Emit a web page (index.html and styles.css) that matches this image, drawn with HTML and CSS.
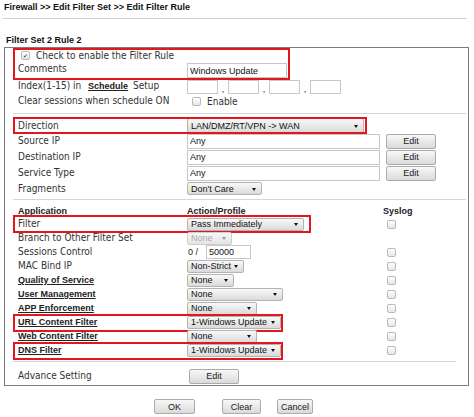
FILE: index.html
```html
<!DOCTYPE html>
<html>
<head>
<meta charset="utf-8">
<link rel="stylesheet" href="styles.css">
</head>
<body>
<div class="page">
  <div class="crumb">Firewall &gt;&gt; Edit Filter Set &gt;&gt; Edit Filter Rule</div>
  <div class="title"><span>Filter Set 2 Rule 2</span></div>
  <div class="box">
    <div class="hl hl-1">
      <div class="row r15">
        <div class="lbl span-all"><span class="cb checked">&#10004;</span><span class="cb-text">Check to enable the Filter Rule</span></div>
      </div>
      <div class="row r15 top">
        <div class="lbl">Comments</div>
        <div class="val"><span class="inp w100">Windows Update</span></div>
      </div>
    </div>
    <div class="row r16">
      <div class="lbl">Index(1-15) in <b class="link">Schedule</b> Setup</div>
      <div class="val"><span class="inp small"></span><span class="comma">,</span><span class="inp small"></span><span class="comma">,</span><span class="inp small"></span><span class="comma">,</span><span class="inp small"></span></div>
    </div>
    <div class="row r14">
      <div class="lbl">Clear sessions when schedule ON</div>
      <div class="val"><span class="cb cb-en"></span><span class="enable">Enable</span></div>
    </div>
    <div class="sep sep-1"></div>
    <div class="hl hl-dir">
      <div class="row r15">
        <div class="lbl">Direction</div>
        <div class="val"><span class="sel h14 w176">LAN/DMZ/RT/VPN -&gt; WAN<i class="arr"></i></span></div>
      </div>
    </div>
    <div class="row r16">
      <div class="lbl">Source IP</div>
      <div class="val wide"><span class="inp w192">Any</span><span class="btn w50">Edit</span></div>
    </div>
    <div class="row r16">
      <div class="lbl">Destination IP</div>
      <div class="val wide"><span class="inp w192">Any</span><span class="btn w50">Edit</span></div>
    </div>
    <div class="row r16">
      <div class="lbl">Service Type</div>
      <div class="val wide"><span class="inp w192">Any</span><span class="btn w50">Edit</span></div>
    </div>
    <div class="row r15">
      <div class="lbl">Fragments</div>
      <div class="val"><span class="sel w75">Don't Care<i class="arr"></i></span></div>
    </div>
    <div class="sep sep-2"></div>
    <div class="row r13 head">
      <div>Application</div>
      <div>Action/Profile</div>
      <div class="syslog-h">Syslog</div>
    </div>
    <div class="hl hl-filter">
      <div class="row r14">
        <div class="lbl">Filter</div>
        <div class="val"><span class="sel w116">Pass Immediately<i class="arr"></i></span></div>
        <div class="sys"><span class="cb"></span></div>
      </div>
    </div>
    <div class="row r14">
      <div class="lbl">Branch to Other Filter Set</div>
      <div class="val"><span class="sel w45 disabled">None<i class="arr"></i></span></div>
      <div class="sys"></div>
    </div>
    <div class="row r14">
      <div class="lbl">Sessions Control</div>
      <div class="val"><span class="zero">0 /</span><span class="inp w45 h14">50000</span></div>
      <div class="sys"><span class="cb"></span></div>
    </div>
    <div class="row r14">
      <div class="lbl">MAC Bind IP</div>
      <div class="val"><span class="sel w56">Non-Strict<i class="arr"></i></span></div>
      <div class="sys"><span class="cb"></span></div>
    </div>
    <div class="row r14">
      <div class="lbl link">Quality of Service</div>
      <div class="val"><span class="sel w46">None<i class="arr"></i></span></div>
      <div class="sys"><span class="cb"></span></div>
    </div>
    <div class="row r14">
      <div class="lbl link">User Management</div>
      <div class="val"><span class="sel w95">None<i class="arr"></i></span></div>
      <div class="sys"><span class="cb"></span></div>
    </div>
    <div class="row r14">
      <div class="lbl link">APP Enforcement</div>
      <div class="val"><span class="sel w69">None<i class="arr"></i></span></div>
      <div class="sys"><span class="cb"></span></div>
    </div>
    <div class="hl hl-url">
      <div class="row r14">
        <div class="lbl link">URL Content Filter</div>
        <div class="val"><span class="sel w93">1-Windows Update<i class="arr"></i></span></div>
        <div class="sys"><span class="cb"></span></div>
      </div>
    </div>
    <div class="row r14">
      <div class="lbl link">Web Content Filter</div>
      <div class="val"><span class="sel w69">None<i class="arr"></i></span></div>
      <div class="sys"><span class="cb"></span></div>
    </div>
    <div class="hl hl-url">
      <div class="row r14">
        <div class="lbl link">DNS Filter</div>
        <div class="val"><span class="sel w93">1-Windows Update<i class="arr"></i></span></div>
        <div class="sys"><span class="cb"></span></div>
      </div>
    </div>
    <div class="sep sep-3"></div>
    <div class="row r16">
      <div class="lbl">Advance Setting</div>
      <div class="val"><span class="btn w50 adv">Edit</span></div>
    </div>
  </div>
  <div class="actions">
    <span class="btn b-ok">OK</span>
    <span class="btn b-clear">Clear</span>
    <span class="btn b-cancel">Cancel</span>
  </div>
</div>
</body>
</html>
```

FILE: styles.css
```css
html, body {
  margin: 0;
  padding: 0;
  background: #fff;
}

body {
  font-family: "DejaVu Sans Condensed", "DejaVu Sans", sans-serif;
  font-size: 10px;
  color: #333;
}

.page {
  width: 474px;
  height: 417px;
  overflow: hidden;
}

.crumb {
  height: 18px;
  line-height: 15px;
  margin: 0 7px 0 3px;
  padding-left: 1px;
  border-bottom: 1px solid #d0d0d0;
  font-family: "Liberation Sans", Arial, sans-serif;
  font-weight: bold;
  font-size: 9px;
  color: #111;
}

.title {
  height: 28px;
  display: flex;
  align-items: flex-end;
  padding-left: 6px;
  font-family: "Liberation Sans", Arial, sans-serif;
  font-weight: bold;
  font-size: 9px;
  color: #111;
}

.title span {
  line-height: 10px;
  padding-bottom: 2px;
}

.box {
  margin-left: 4px;
  width: 465px;
  box-sizing: border-box;
  border: 1px solid #7c7c7c;
  padding: 0 0 1px 13px;
}

.row {
  display: grid;
  grid-template-columns: 169px 196px 1fr;
  align-items: center;
}

.row.top {
  align-items: start;
}

.r13 { height: 13px; }
.r14 { height: 14px; }
.r15 { height: 15px; }
.r16 { height: 16px; }

.lbl {
  white-space: nowrap;
  line-height: 12px;
}

.span-all {
  grid-column: 1 / 4;
  display: flex;
  align-items: center;
}

.val {
  display: flex;
  align-items: center;
}

.val.wide {
  grid-column: 2 / 4;
}

.link {
  font-family: "Liberation Sans", Arial, sans-serif;
  font-weight: bold;
  font-size: 9px;
  color: #222;
  text-decoration: underline;
}

b.link {
  margin: 0 2px 0 4px;
}

.head {
  font-family: "Liberation Sans", Arial, sans-serif;
  font-weight: bold;
  font-size: 9px;
  color: #222;
}

.syslog-h {
  padding-left: 0;
}

.sys {
  display: flex;
  align-items: center;
  padding-left: 4px;
}

/* checkbox */
.cb {
  display: inline-flex;
  align-items: center;
  justify-content: center;
  width: 7px;
  height: 7px;
  border: 1px solid #b9b9b9;
  border-radius: 2px;
  background: linear-gradient(#ffffff, #e6e6e6);
  font-size: 6px;
  line-height: 1;
  color: #666;
  overflow: hidden;
}

.cb.checked {
  margin-left: 3px;
  color: #555;
}

.cb-text {
  margin-left: 6px;
}

.cb-en {
  margin-left: 5px;
}

.enable {
  margin-left: 6px;
}

/* inputs */
.inp {
  display: inline-flex;
  align-items: center;
  box-sizing: border-box;
  height: 15px;
  border: 1px solid #c7c7c7;
  background: #fff;
  padding-left: 2px;
  font-family: "Liberation Sans", Arial, sans-serif;
  font-size: 9px;
  color: #111;
}

.inp.h14 { height: 14px; }
.inp.small { width: 31px; height: 14px; margin-top: 1px; }
.w100 { width: 100px; }
.w192 { width: 193px; }
.w45 { width: 45px; }

.comma {
  width: 10px;
  text-align: center;
  font-family: "Liberation Sans", Arial, sans-serif;
  font-size: 9px;
  color: #222;
  align-self: flex-end;
  line-height: 10px;
}

.zero {
  font-family: "Liberation Sans", Arial, sans-serif;
  font-size: 9px;
  color: #222;
  width: 18px;
  padding-left: 1px;
}

/* selects */
.sel {
  position: relative;
  display: inline-flex;
  align-items: center;
  box-sizing: border-box;
  height: 13px;
  border: 1px solid #b3b3b3;
  border-radius: 2px;
  background: linear-gradient(#f9f9f9, #dadada);
  padding-left: 3px;
  font-family: "Liberation Sans", Arial, sans-serif;
  font-size: 9px;
  color: #111;
  white-space: nowrap;
}

.sel.h14 { height: 15px; }

.sel .arr {
  position: absolute;
  right: 5px;
  top: 50%;
  margin-top: -1px;
  width: 0;
  height: 0;
  border-left: 2px solid transparent;
  border-right: 2px solid transparent;
  border-top: 3px solid #111;
}

.sel.disabled {
  color: #aaa;
  background: linear-gradient(#f7f7f7, #e4e4e4);
  border-color: #cfcfcf;
}

.sel.disabled .arr {
  border-top-color: #999;
}

.w176 { width: 177px; }
.w75 { width: 75px; }
.w116 { width: 117px; }
.w56 { width: 57px; }
.w46 { width: 47px; }
.w95 { width: 96px; }
.w69 { width: 70px; }
.w93 { width: 94px; }

/* buttons */
.btn {
  display: inline-flex;
  align-items: center;
  justify-content: center;
  box-sizing: border-box;
  height: 15px;
  border: 1px solid #ababab;
  border-radius: 2px;
  background: linear-gradient(#f8f8f8, #dadada);
  font-family: "Liberation Sans", Arial, sans-serif;
  font-size: 9px;
  color: #222;
}

.w50 { width: 50px; }

.val.wide .btn {
  margin-left: 6px;
}

.btn.adv {
  margin-left: 2px;
}

/* separators */
.sep {
  border-top: 1px solid #d6d6d6;
  margin-left: -5px;
}

.sep-1 { margin-top: 5px; margin-bottom: 4px; margin-right: 2px; }
.sep-2 { margin-top: 3px; margin-bottom: 4px; margin-right: 2px; }
.sep-3 { margin-top: 4px; margin-bottom: 6px; margin-right: 12px; }

/* red highlight annotations */
.hl {
  position: relative;
}

.hl::after {
  content: "";
  position: absolute;
  left: -5px;
  top: var(--t, -1px);
  bottom: var(--b, -2px);
  width: var(--w, 270px);
  box-sizing: border-box;
  border: 2px solid #e2161f;
  pointer-events: none;
}

.hl-1 { --t: 0px; --b: -2px; --w: 277px; }
.hl-dir { --t: -1px; --b: -1px; --w: 354px; }
.hl-filter { --t: -2px; --b: -2px; --w: 298px; }
.hl-url { --t: -1px; --b: -3px; --w: 270px; }

/* bottom buttons */
.actions {
  display: flex;
  margin-top: 13px;
  padding-left: 154px;
}

.b-ok { width: 41px; }
.b-clear { width: 39px; margin-left: 27px; }
.b-cancel { width: 36px; margin-left: 16px; }
```
